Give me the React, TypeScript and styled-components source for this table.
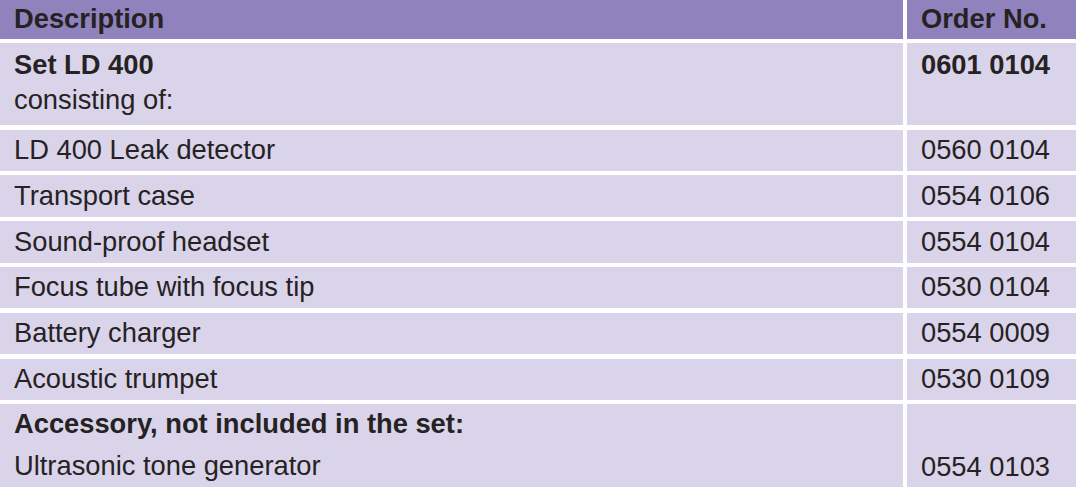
import { Fragment } from 'react';
import styled, { createGlobalStyle } from 'styled-components';

const rows = [
  { desc: 'LD 400 Leak detector', no: '0560 0104' },
  { desc: 'Transport case', no: '0554 0106' },
  { desc: 'Sound-proof headset', no: '0554 0104' },
  { desc: 'Focus tube with focus tip', no: '0530 0104' },
  { desc: 'Battery charger', no: '0554 0009' },
  { desc: 'Acoustic trumpet', no: '0530 0109' },
];

const App = () => {
  return (
    <>
      <GlobalStyle />
      <Table>
        <HeadCell>Description</HeadCell>
        <HeadCell>Order No.</HeadCell>

        <Cell $pad={5.5} $gap={4}>
          <Line $bold>Set LD 400</Line>
          <Line>consisting of:</Line>
        </Cell>
        <Cell $pad={5.5}>
          <Line $bold>0601 0104</Line>
        </Cell>

        {rows.map((row) => (
          <Fragment key={row.no + row.desc}>
            <Cell>
              <Line>{row.desc}</Line>
            </Cell>
            <Cell>
              <Line>{row.no}</Line>
            </Cell>
          </Fragment>
        ))}

        <Cell $pad={3.5} $gap={11}>
          <Line $bold>Accessory, not included in the set:</Line>
          <Line>Ultrasonic tone generator</Line>
        </Cell>
        <Cell $bottom>
          <Line>0554 0103</Line>
        </Cell>
      </Table>
    </>
  );
};

const GlobalStyle = createGlobalStyle`
  body {
    margin: 0;
    background: #fff;
  }
`;

const Table = styled.div`
  display: grid;
  grid-template-columns: 903px 1fr;
  grid-template-rows: 39px 82px repeat(6, 41.5px) 83px;
  column-gap: 4px;
  row-gap: 4.3px;
  width: 1076px;
  height: 488px;
  overflow: hidden;
  font-family: "Liberation Sans", Arial, sans-serif;
  font-size: 27.3px;
  line-height: 31px;
  color: #262223;
`;

const HeadCell = styled.div`
  background: #8f82bd;
  padding: 2.5px 14px 0;
  font-weight: 700;
`;

const Cell = styled.div<{ $pad?: number; $gap?: number; $bottom?: boolean }>`
  display: flex;
  flex-direction: column;
  justify-content: ${(p) => (p.$bottom ? 'flex-end' : 'flex-start')};
  gap: ${(p) => p.$gap ?? 0}px;
  background: #d9d4ea;
  padding: ${(p) => (p.$bottom ? '0 14px 5.5px' : `${p.$pad ?? 4.5}px 14px 0`)};
`;

const Line = styled.div<{ $bold?: boolean }>`
  font-weight: ${(p) => (p.$bold ? 700 : 400)};
  white-space: nowrap;
`;

export default App;
